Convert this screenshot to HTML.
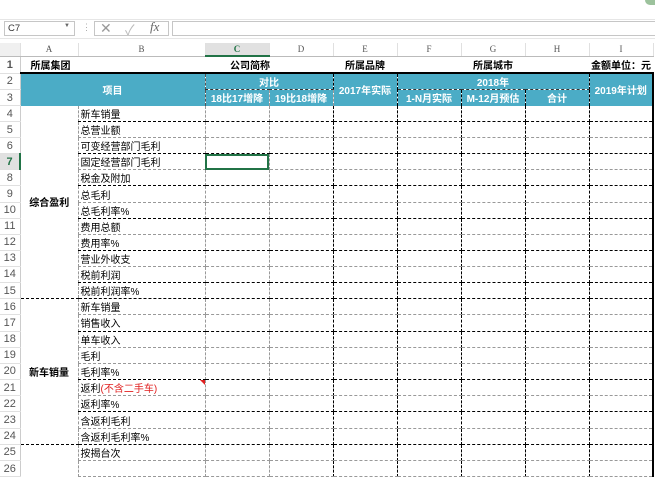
<!DOCTYPE html>
<html><head><meta charset="utf-8"><style>
*{margin:0;padding:0;box-sizing:border-box}
body{width:655px;height:463px;overflow:hidden;background:#fff;font-family:"Liberation Sans","Noto Sans CJK SC",sans-serif;font-size:10px;color:#000;position:relative}
.abs{position:absolute}
table{position:absolute;left:0;top:43px;border-collapse:collapse;table-layout:fixed}
td{padding:0 2px;white-space:nowrap;overflow:hidden;font-size:10px;vertical-align:middle}
td.rh{background:#fff;color:#555;text-align:center;border-right:1px solid #ccc;border-bottom:1px solid #e0e0e0;font-family:"Liberation Sans",sans-serif;font-size:11px}
tr.ch td{background:#fff;color:#555;text-align:center;font-size:9px;border-right:1px solid #e0e0e0;border-bottom:1px solid #bbb;font-family:"Liberation Serif",serif}
.h{background:#4bacc6;color:#fff;font-weight:bold;text-align:center}
.g{border-right:1px dashed #999}
.k{border-right:1px dashed #000}
tr.d td.c{border-bottom:1px dashed #999}
tr.b td.c{border-bottom:1px dashed #000}
td.b2{border-right:1px dashed #999;border-left:1px dashed #999}
.red{color:#e02020}
</style></head><body>
<div class="abs" style="left:645px;top:0;width:10px;height:5px;border-radius:0 0 0 8px;background:#5a9a5a;opacity:.6"></div>
<div class="abs" style="left:0;top:19px;width:655px;height:20px;border-top:1px solid #e6e6e6;border-bottom:1px solid #e6e6e6"></div>
<div class="abs" style="left:4px;top:21px;width:71px;height:15px;border:1px solid #c6c6c6;font-size:9.5px;color:#333;padding:1px 3px">C7<span style="position:absolute;right:4px;top:1px;font-size:6px;color:#666">▼</span></div>
<div class="abs" style="left:82px;top:22px;color:#aaa;font-size:9px">⋮</div>
<div class="abs" style="left:94px;top:21px;width:75px;height:15px;border:1px solid #c6c6c6"></div>
<div class="abs" style="left:100px;top:20px;color:#999;font-size:14px">✕</div>
<div class="abs" style="left:125px;top:20px;color:#bbb;font-size:14px">✓</div>
<div class="abs" style="left:150px;top:19px;color:#666;font-size:13px;font-style:italic;font-family:'Liberation Serif',serif">fx</div>
<div class="abs" style="left:172px;top:21px;width:483px;height:15px;border:1px solid #c6c6c6;border-right:none"></div>

<table>
<colgroup><col style="width:20px"><col style="width:58px"><col style="width:127px"><col style="width:64px"><col style="width:64px"><col style="width:64px"><col style="width:64px"><col style="width:64px"><col style="width:64px"><col style="width:64px"></colgroup>
<tr class="ch" style="height:13px"><td style="background:#f0f0f0"></td><td>A</td><td>B</td><td style="background:#e1e1e1;color:#217346;font-weight:bold;border-bottom:2px solid #217346">C</td><td>D</td><td>E</td><td>F</td><td>G</td><td>H</td><td>I</td></tr>
<tr style="height:15px;font-weight:bold"><td class="rh">1</td><td colspan="2" style="font-weight:bold;padding-left:10px">所属集团</td><td colspan="2" style="font-weight:bold;text-align:center;padding-right:40px">公司简称</td><td style="font-weight:bold;text-align:center">所属品牌</td><td colspan="3" style="font-weight:bold;text-align:center">所属城市</td><td style="font-weight:bold;text-align:right">金额单位：元</td></tr>
<tr style="height:16px"><td class="rh">2</td><td colspan="2" rowspan="2" class="h" style="border-top:2px solid #000">项目</td><td colspan="2" class="h k" style="border-top:2px solid #000;border-left:1px dashed #555;border-bottom:1px dashed #333">对比</td><td rowspan="2" class="h k" style="border-top:2px solid #000">2017年实际</td><td colspan="3" class="h k" style="border-top:2px solid #000;border-bottom:1px dashed #333">2018年</td><td rowspan="2" class="h" style="border-top:2px solid #000;border-right:2px solid #000">2019年计划</td></tr>
<tr style="height:16px"><td class="rh">3</td><td class="h g" style="border-left:1px dashed #555">18比17增降</td><td class="h g">19比18增降</td><td class="h k">1-N月实际</td><td class="h k">M-12月预估</td><td class="h k">合计</td></tr>

<tr class="b" style="height:16.1px"><td class="rh">4</td><td rowspan="12" style="font-weight:bold;text-align:center;border-bottom:1px dashed #000">综合盈利</td><td class="c b2">新车销量</td><td class="c g"></td><td class="c k"></td><td class="c k"></td><td class="c k"></td><td class="c k"></td><td class="c k"></td><td class="c" style="border-right:2px solid #000"></td></tr>
<tr class="d" style="height:16.1px"><td class="rh">5</td><td class="c b2">总营业额</td><td class="c g"></td><td class="c k"></td><td class="c k"></td><td class="c k"></td><td class="c k"></td><td class="c k"></td><td class="c" style="border-right:2px solid #000"></td></tr>
<tr class="b" style="height:16.1px"><td class="rh">6</td><td class="c b2">可变经营部门毛利</td><td class="c g"></td><td class="c k"></td><td class="c k"></td><td class="c k"></td><td class="c k"></td><td class="c k"></td><td class="c" style="border-right:2px solid #000"></td></tr>
<tr class="d" style="height:16.1px"><td class="rh" style="background:#e1e1e1;color:#217346;font-weight:bold;border-right:2px solid #217346">7</td><td class="c b2">固定经营部门毛利</td><td class="c g" style="outline:2px solid #217346;outline-offset:-2px"></td><td class="c k"></td><td class="c k"></td><td class="c k"></td><td class="c k"></td><td class="c k"></td><td class="c" style="border-right:2px solid #000"></td></tr>
<tr class="b" style="height:16.1px"><td class="rh">8</td><td class="c b2">税金及附加</td><td class="c g"></td><td class="c k"></td><td class="c k"></td><td class="c k"></td><td class="c k"></td><td class="c k"></td><td class="c" style="border-right:2px solid #000"></td></tr>
<tr class="d" style="height:16.1px"><td class="rh">9</td><td class="c b2">总毛利</td><td class="c g"></td><td class="c k"></td><td class="c k"></td><td class="c k"></td><td class="c k"></td><td class="c k"></td><td class="c" style="border-right:2px solid #000"></td></tr>
<tr class="b" style="height:16.1px"><td class="rh">10</td><td class="c b2">总毛利率%</td><td class="c g"></td><td class="c k"></td><td class="c k"></td><td class="c k"></td><td class="c k"></td><td class="c k"></td><td class="c" style="border-right:2px solid #000"></td></tr>
<tr class="d" style="height:16.1px"><td class="rh">11</td><td class="c b2">费用总额</td><td class="c g"></td><td class="c k"></td><td class="c k"></td><td class="c k"></td><td class="c k"></td><td class="c k"></td><td class="c" style="border-right:2px solid #000"></td></tr>
<tr class="b" style="height:16.1px"><td class="rh">12</td><td class="c b2">费用率%</td><td class="c g"></td><td class="c k"></td><td class="c k"></td><td class="c k"></td><td class="c k"></td><td class="c k"></td><td class="c" style="border-right:2px solid #000"></td></tr>
<tr class="d" style="height:16.1px"><td class="rh">13</td><td class="c b2">营业外收支</td><td class="c g"></td><td class="c k"></td><td class="c k"></td><td class="c k"></td><td class="c k"></td><td class="c k"></td><td class="c" style="border-right:2px solid #000"></td></tr>
<tr class="b" style="height:16.1px"><td class="rh">14</td><td class="c b2">税前利润</td><td class="c g"></td><td class="c k"></td><td class="c k"></td><td class="c k"></td><td class="c k"></td><td class="c k"></td><td class="c" style="border-right:2px solid #000"></td></tr>
<tr class="b" style="height:16.1px"><td class="rh">15</td><td class="c b2">税前利润率%</td><td class="c g"></td><td class="c k"></td><td class="c k"></td><td class="c k"></td><td class="c k"></td><td class="c k"></td><td class="c" style="border-right:2px solid #000"></td></tr>

<tr class="d" style="height:16.2px"><td class="rh">16</td><td rowspan="9" style="font-weight:bold;text-align:center;border-bottom:1px dashed #000">新车销量</td><td class="c b2">新车销量</td><td class="c g"></td><td class="c k"></td><td class="c k"></td><td class="c k"></td><td class="c k"></td><td class="c k"></td><td class="c" style="border-right:2px solid #000"></td></tr>
<tr class="b" style="height:16.2px"><td class="rh">17</td><td class="c b2">销售收入</td><td class="c g"></td><td class="c k"></td><td class="c k"></td><td class="c k"></td><td class="c k"></td><td class="c k"></td><td class="c" style="border-right:2px solid #000"></td></tr>
<tr class="d" style="height:16.2px"><td class="rh">18</td><td class="c b2">单车收入</td><td class="c g"></td><td class="c k"></td><td class="c k"></td><td class="c k"></td><td class="c k"></td><td class="c k"></td><td class="c" style="border-right:2px solid #000"></td></tr>
<tr class="d" style="height:16.2px"><td class="rh">19</td><td class="c b2">毛利</td><td class="c g"></td><td class="c k"></td><td class="c k"></td><td class="c k"></td><td class="c k"></td><td class="c k"></td><td class="c" style="border-right:2px solid #000"></td></tr>
<tr class="b" style="height:16.2px"><td class="rh">20</td><td class="c b2">毛利率%</td><td class="c g"></td><td class="c k"></td><td class="c k"></td><td class="c k"></td><td class="c k"></td><td class="c k"></td><td class="c" style="border-right:2px solid #000"></td></tr>
<tr class="d" style="height:16.2px"><td class="rh">21</td><td class="c b2" style="position:relative">返利<span class="red">(不含二手车)</span><span style="position:absolute;right:0;top:0;width:0;height:0;border-top:5px solid #e02020;border-left:5px solid transparent"></span></td><td class="c g"></td><td class="c k"></td><td class="c k"></td><td class="c k"></td><td class="c k"></td><td class="c k"></td><td class="c" style="border-right:2px solid #000"></td></tr>
<tr class="b" style="height:16.2px"><td class="rh">22</td><td class="c b2">返利率%</td><td class="c g"></td><td class="c k"></td><td class="c k"></td><td class="c k"></td><td class="c k"></td><td class="c k"></td><td class="c" style="border-right:2px solid #000"></td></tr>
<tr class="d" style="height:16.2px"><td class="rh">23</td><td class="c b2">含返利毛利</td><td class="c g"></td><td class="c k"></td><td class="c k"></td><td class="c k"></td><td class="c k"></td><td class="c k"></td><td class="c" style="border-right:2px solid #000"></td></tr>
<tr class="b" style="height:16.2px"><td class="rh">24</td><td class="c b2">含返利毛利率%</td><td class="c g"></td><td class="c k"></td><td class="c k"></td><td class="c k"></td><td class="c k"></td><td class="c k"></td><td class="c" style="border-right:2px solid #000"></td></tr>
<tr class="d" style="height:16.2px"><td class="rh">25</td><td></td><td class="c b2">按揭台次</td><td class="c g"></td><td class="c k"></td><td class="c k"></td><td class="c k"></td><td class="c k"></td><td class="c k"></td><td class="c" style="border-right:2px solid #000"></td></tr>
<tr class="d" style="height:16px"><td class="rh">26</td><td></td><td class="c b2"></td><td class="c g"></td><td class="c k"></td><td class="c k"></td><td class="c k"></td><td class="c k"></td><td class="c k"></td><td class="c" style="border-right:2px solid #000"></td></tr>
</table>
</body></html>
